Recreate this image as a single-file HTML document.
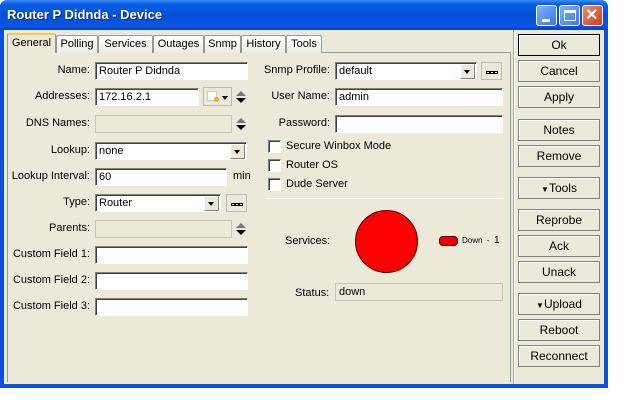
<!DOCTYPE html>
<html><head><meta charset="utf-8"><style>
*{box-sizing:border-box;margin:0;padding:0}
body{width:640px;height:400px;background:#fff;font-family:"Liberation Sans",sans-serif;font-size:11px;color:#000;position:relative;overflow:hidden}
.a{position:absolute}
.win{left:0;top:0;width:608px;height:388px;background:#0A52DC;border-radius:7px 7px 0 0}
.title{left:0;top:0;width:608px;height:30px;border-radius:7px 7px 0 0;background:linear-gradient(#3D8BF5 0,#0A5EE6 4px,#0550D8 15px,#0A55E0 26px,#0842C0 30px)}
.ttext{left:7px;top:7px;color:#fff;font-weight:bold;font-size:13px;text-shadow:1px 1px #0A2A80}
.body{left:4px;top:30px;width:600px;height:354px;background:#ECE9D8}
.tb{width:21px;height:21px;top:5px;border:1px solid #fff;border-radius:3px;background:linear-gradient(135deg,#5A9CFF,#2663E0)}
.tab{top:35px;height:18px;border:1px solid #919B9C;border-bottom:none;background:linear-gradient(#fff,#ECEBE5);text-align:center;line-height:16px;border-radius:2px 2px 0 0}
.lbl{text-align:right;width:90px;line-height:17px}
.in{height:18px;background:#fff;border:1px solid #7F9DB9;border-color:#808080 #fff #fff #808080;box-shadow:inset 1px 1px #404040;padding-left:3px;line-height:16px}
.dis{background:#ECE9D8}
.dd{width:15px;height:15px;right:1px;top:1px;background:#ECE9D8;border:1px solid;border-color:#fff #808080 #808080 #fff}
.dd:after{content:"";position:absolute;left:3px;top:5px;border:3.5px solid transparent;border-top:4px solid #000}
.btn{left:518px;width:82px;height:22px;border:1px solid #808080;background:#ECE9D8;text-align:center;line-height:20px;font-size:12px;box-shadow:inset 1px 1px #fff}
.dot{width:21px;height:18px;border:1px solid #bbb;background:#ECE9D8}
.dot i{position:absolute;top:8px;width:4px;height:3px;border:1px solid #000}
.sp{width:10px}
.sp:before{content:"";position:absolute;left:0;top:0;border:5px solid transparent;border-bottom:5px solid #777;border-top:none}
.sp:after{content:"";position:absolute;left:0;top:7px;border:5px solid transparent;border-top:5px solid #000;border-bottom:none}
.cb{width:13px;height:13px;border:1px solid;border-color:#808080 #fff #fff #808080;background:#fff;box-shadow:inset 1px 1px #404040}
</style></head><body>
<div class="a win"></div>
<div class="a title"></div>
<div class="a ttext">Router P Didnda - Device</div>
<div class="a tb" style="left:536px;background:linear-gradient(135deg,#7FB0FF,#3A78E8)"><div class="a" style="left:5px;top:13px;width:8px;height:3px;background:#fff"></div></div>
<div class="a tb" style="left:559px;background:linear-gradient(135deg,#7FB0FF,#3A78E8)"><div class="a" style="left:4px;top:4px;width:12px;height:11px;border:1px solid #fff;border-top-width:3px"></div></div>
<div class="a tb" style="left:582px;background:linear-gradient(135deg,#F08A6A,#D0401A)"><div class="a" style="left:2px;top:0;color:#fff;font-size:16px;font-weight:bold;line-height:19px">✕</div></div>
<div class="a body"></div>
<div class="a" style="left:513px;top:30px;width:1px;height:354px;background:#ACA899"></div>
<div class="a" style="left:514px;top:30px;width:1px;height:354px;background:#fff"></div>
<div class="a" style="left:7px;top:52px;width:504px;height:330px;border:1px solid #919B9C;border-bottom:none;background:#ECE9D8"></div>
<div class="a tab" style="left:56px;width:42px">Polling</div>
<div class="a tab" style="left:98px;width:55px">Services</div>
<div class="a tab" style="left:153px;width:51px">Outages</div>
<div class="a tab" style="left:204px;width:37px">Snmp</div>
<div class="a tab" style="left:241px;width:45px">History</div>
<div class="a tab" style="left:286px;width:36px">Tools</div>
<div class="a tab" style="left:7px;top:33px;height:20px;width:49px;background:#ECE9D8;border-top:2px solid #FFC83C;line-height:16px">General</div>

<div class="a lbl" style="left:0;top:62px">Name:</div>
<div class="a in" style="left:95px;top:62px;width:153px">Router P Didnda</div>
<div class="a lbl" style="left:0;top:88px">Addresses:</div>
<div class="a in" style="left:95px;top:88px;width:104px">172.16.2.1</div>
<div class="a" style="left:203px;top:87px;width:29px;height:19px;border:1px solid #bbb;background:#ECE9D8"><div class="a" style="left:3px;top:3px;width:10px;height:10px;background:#fff;border:1px solid #ccc"></div><div class="a" style="left:10px;top:9px;width:5px;height:5px;border-radius:50%;background:#F0B020"></div><div class="a" style="left:18px;top:8px;border:3.5px solid transparent;border-top:4px solid #000"></div></div>
<div class="a sp" style="left:236px;top:91px;height:12px"></div>
<div class="a lbl" style="left:0;top:115px">DNS Names:</div>
<div class="a in dis" style="left:95px;top:115px;width:137px;box-shadow:none;border:1px solid #c8c5b8"></div>
<div class="a sp" style="left:236px;top:118px;height:12px"></div>
<div class="a lbl" style="left:0;top:142px">Lookup:</div>
<div class="a in" style="left:95px;top:142px;width:152px">none<div class="a dd"></div></div>
<div class="a lbl" style="left:0;top:168px">Lookup Interval:</div>
<div class="a in" style="left:95px;top:168px;width:132px">60</div>
<div class="a" style="left:233px;top:168px;line-height:17px">min</div>
<div class="a lbl" style="left:0;top:194px">Type:</div>
<div class="a in" style="left:95px;top:194px;width:126px">Router<div class="a dd"></div></div>
<div class="a dot" style="left:226px;top:194px"><i style="left:4px"></i><i style="left:8px"></i><i style="left:12px"></i></div>
<div class="a lbl" style="left:0;top:220px">Parents:</div>
<div class="a in dis" style="left:95px;top:220px;width:137px;box-shadow:none;border:1px solid #c8c5b8"></div>
<div class="a sp" style="left:236px;top:223px;height:12px"></div>
<div class="a lbl" style="left:0;top:246px">Custom Field 1:</div>
<div class="a in" style="left:95px;top:246px;width:153px"></div>
<div class="a lbl" style="left:0;top:272px">Custom Field 2:</div>
<div class="a in" style="left:95px;top:272px;width:153px"></div>
<div class="a lbl" style="left:0;top:298px">Custom Field 3:</div>
<div class="a in" style="left:95px;top:298px;width:153px"></div>

<div class="a lbl" style="left:240px;top:62px">Snmp Profile:</div>
<div class="a in" style="left:335px;top:62px;width:142px">default<div class="a dd"></div></div>
<div class="a dot" style="left:481px;top:62px"><i style="left:4px"></i><i style="left:8px"></i><i style="left:12px"></i></div>
<div class="a lbl" style="left:240px;top:88px">User Name:</div>
<div class="a in" style="left:335px;top:88px;width:168px">admin</div>
<div class="a lbl" style="left:240px;top:115px">Password:</div>
<div class="a in" style="left:335px;top:115px;width:168px"></div>
<div class="a cb" style="left:268px;top:140px"></div><div class="a" style="left:286px;top:140px;line-height:13px">Secure Winbox Mode</div>
<div class="a cb" style="left:268px;top:159px"></div><div class="a" style="left:286px;top:159px;line-height:13px">Router OS</div>
<div class="a cb" style="left:268px;top:178px"></div><div class="a" style="left:286px;top:178px;line-height:13px">Dude Server</div>
<div class="a" style="left:267px;top:198px;width:236px;height:1px;background:#ACA899;border-bottom:1px solid #fff"></div>
<div class="a" style="left:285px;top:233px;line-height:17px">Services:</div>
<div class="a" style="left:355px;top:210px;width:63px;height:63px;border-radius:50%;background:#F00;border:1px solid #400"></div>
<div class="a" style="left:439px;top:236px;width:19px;height:10px;border-radius:4px;background:#E00;border:1px solid #400"></div>
<div class="a" style="left:462px;top:235px;font-size:8px;line-height:12px">Down &nbsp;- &nbsp;<span style="font-size:10px">1</span></div>
<div class="a" style="left:295px;top:285px;line-height:17px">Status:</div>
<div class="a in dis" style="left:335px;top:283px;width:168px;box-shadow:none;border:1px solid #c8c5b8">down</div>

<div class="a btn" style="top:34px;border:1px solid #000">Ok</div>
<div class="a btn" style="top:60px">Cancel</div>
<div class="a btn" style="top:86px">Apply</div>
<div class="a btn" style="top:119px">Notes</div>
<div class="a btn" style="top:145px">Remove</div>
<div class="a btn" style="top:177px"><span style="font-size:8px">▼</span>Tools</div>
<div class="a btn" style="top:209px">Reprobe</div>
<div class="a btn" style="top:235px">Ack</div>
<div class="a btn" style="top:261px">Unack</div>
<div class="a btn" style="top:293px"><span style="font-size:8px">▼</span>Upload</div>
<div class="a btn" style="top:319px">Reboot</div>
<div class="a btn" style="top:345px">Reconnect</div>
</body></html>
